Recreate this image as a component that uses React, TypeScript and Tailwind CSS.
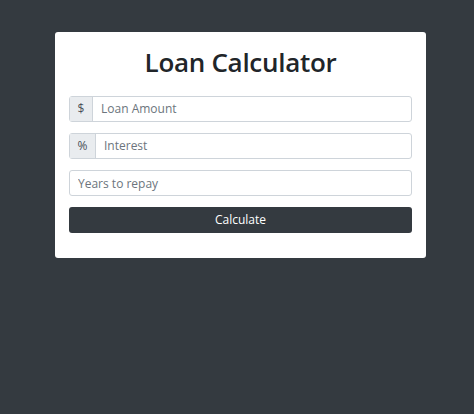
export default function App() {
  return (
    <div
      className="min-h-screen bg-[#343a40] pt-[32px]"
      style={{ fontFamily: '"Open Sans", "Noto Sans", sans-serif' }}
    >
      <div className="ml-[55px] w-[371px] rounded-[3px] bg-white px-[14px] pt-[15px] pb-[25px]">
        <h1 className="mb-[18px] text-center text-[26px] leading-[1.2] font-semibold tracking-[-0.3px] text-[#212529]">
          Loan Calculator
        </h1>

        <div className="flex flex-col gap-[11px]">
          {/* Loan amount */}
          <div className="flex h-[26px] rounded-[3px] border border-[#ced4da]">
            <span className="flex w-[23px] items-center justify-center border-r border-[#ced4da] bg-[#e9ecef] text-[12px] text-[#495057]">
              $
            </span>
            <input
              className="min-w-0 flex-1 px-[8px] text-[12px] text-[#495057] outline-none placeholder:text-[#6c757d]"
              placeholder="Loan Amount"
            />
          </div>

          {/* Interest */}
          <div className="flex h-[26px] rounded-[3px] border border-[#ced4da]">
            <span className="flex w-[26px] items-center justify-center border-r border-[#ced4da] bg-[#e9ecef] text-[12px] text-[#495057]">
              %
            </span>
            <input
              className="min-w-0 flex-1 px-[8px] text-[12px] text-[#495057] outline-none placeholder:text-[#6c757d]"
              placeholder="Interest"
            />
          </div>

          <input
            className="h-[26px] rounded-[3px] border border-[#ced4da] px-[8px] text-[12px] text-[#495057] outline-none placeholder:text-[#6c757d]"
            placeholder="Years to repay"
          />

          <button className="h-[26px] rounded-[3px] bg-[#343a40] text-[12px] text-white">
            Calculate
          </button>
        </div>
      </div>
    </div>
  );
}
